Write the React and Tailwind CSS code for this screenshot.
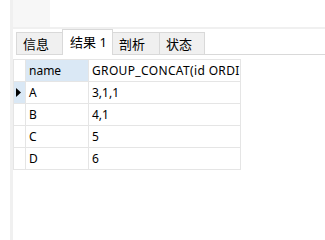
import React from 'react';

// Result grid panel: tab strip over a small query result table.

const FONT = { fontFamily: '"Noto Sans", "Noto Sans CJK SC", sans-serif' };

const rows = [
  { name: 'A', value: '3,1,1', current: true },
  { name: 'B', value: '4,1' },
  { name: 'C', value: '5' },
  { name: 'D', value: '6' },
];

function Tab({ label, active, className = '' }) {
  if (active) {
    return (
      <div className="h-[26px] w-[51px] shrink-0 bg-white border border-b-0 border-[#d9d9d9] pl-[7px] pt-[2px] text-[13px] leading-[20px] text-black">
        {label}
      </div>
    );
  }
  return (
    <div
      className={`h-[23px] w-[46px] shrink-0 bg-[#f0f0f0] border-t border-b border-[#d9d9d9] pl-[6px] text-[13px] leading-[22px] text-black ${className}`}
    >
      {label}
    </div>
  );
}

export default function App() {
  return (
    <div className="w-[325px] h-[240px] bg-white flex overflow-hidden" style={FONT}>
      <div className="w-[10px] shrink-0" />
      <div className="w-[3px] shrink-0 bg-[#f0f0f0]" />
      <div className="flex-1 flex flex-col">
        <div className="h-[27px] flex">
          <div className="w-[37px] bg-[#f7f7f7]" />
        </div>
        <div className="h-[2px] bg-[#f0f0f0]" />

        <div className="h-[26px] flex items-end pl-[3px]">
          <Tab label="信息" className="border-l" />
          <Tab label="结果 1" active />
          <Tab label="剖析" />
          <Tab label="状态" className="border-l border-r" />
          <div className="flex-1 h-full border-b border-[#d9d9d9]" />
        </div>

        <div className="mt-[4px] w-[228px] border-t border-l border-[#e5e5e5] text-[12px] text-black">
          <div className="flex h-[22px]">
            <div className="w-[12px] border-r border-b border-[#e5e5e5]" />
            <div className="w-[63px] bg-[#dae8f5] border-r border-b border-[#e5e5e5] pl-[3px] leading-[21px]">
              name
            </div>
            <div className="w-[152px] border-r border-b border-[#e5e5e5] pl-[3px] leading-[21px] whitespace-nowrap tracking-[0.35px]">
              GROUP_CONCAT(id ORDI
            </div>
          </div>
          {rows.map((r) => (
            <div key={r.name} className="flex h-[22px]">
              <div
                className={`w-[12px] border-r border-b border-[#e5e5e5] flex items-center pl-[2px] ${
                  r.current ? 'bg-[#dae8f5]' : ''
                }`}
              >
                {r.current && (
                  <svg width="5" height="9" viewBox="0 0 5 9">
                    <path d="M0 0 L5 4.5 L0 9 Z" fill="#000" />
                  </svg>
                )}
              </div>
              <div className="w-[63px] border-r border-b border-[#e5e5e5] pl-[3px] leading-[21px]">{r.name}</div>
              <div className="w-[152px] border-r border-b border-[#e5e5e5] pl-[3px] leading-[21px]">{r.value}</div>
            </div>
          ))}
        </div>
      </div>
    </div>
  );
}
